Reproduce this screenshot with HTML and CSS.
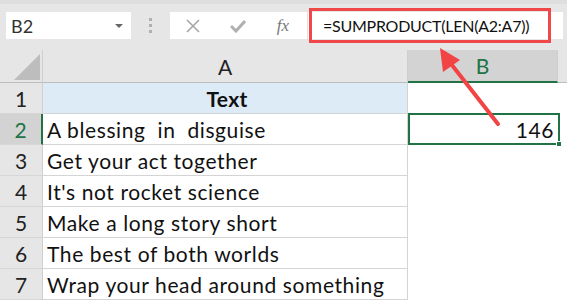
FILE: index.html
```html
<!DOCTYPE html>
<html lang="en">
<head>
    <meta charset="UTF-8">
    <title>SUMPRODUCT LEN</title>
    <link rel="stylesheet" href="styles.css">
</head>
<body>
    <div class="toolbar">
        <div class="name-box">
            <span>B2</span>
            <span class="caret"></span>
        </div>
        <div class="grip"><i></i><i></i><i></i></div>
        <div class="formula-bar">
            <div class="fx-buttons">
                <svg width="14" height="14" viewBox="0 0 14 14"><path d="M1 1 L13 13 M13 1 L1 13" stroke="#a6a6a6" stroke-width="1.6" fill="none"/></svg>
                <svg width="16" height="14" viewBox="0 0 16 14"><path d="M1 7 L6 12 L15 2" stroke="#b0b0b0" stroke-width="3" fill="none"/></svg>
                <span class="fx">fx</span>
            </div>
            <div class="formula-input">
                <span class="formula">=SUMPRODUCT(LEN(A2:A7))</span>
                <div class="callout"></div>
            </div>
        </div>
    </div>

    <div class="sheet">
        <div class="corner"><span></span></div>
        <div class="col-head">A</div>
        <div class="col-head active">B</div>
        <div class="col-rest"></div>

        <div class="row-head">1</div>
        <div class="cell title">Text</div>
        <div class="cell blank"></div>
        <div class="cell blank"></div>

        <div class="row-head active">2</div>
        <div class="cell">A blessing&nbsp; in&nbsp; disguise</div>
        <div class="cell blank selected">146<span class="handle"></span></div>
        <div class="cell blank"></div>

        <div class="row-head">3</div>
        <div class="cell">Get your act together</div>
        <div class="cell blank"></div>
        <div class="cell blank"></div>

        <div class="row-head">4</div>
        <div class="cell">It's not rocket science</div>
        <div class="cell blank"></div>
        <div class="cell blank"></div>

        <div class="row-head">5</div>
        <div class="cell">Make a long story short</div>
        <div class="cell blank"></div>
        <div class="cell blank"></div>

        <div class="row-head">6</div>
        <div class="cell">The best of both worlds</div>
        <div class="cell blank"></div>
        <div class="cell blank"></div>

        <div class="row-head">7</div>
        <div class="cell">Wrap your head around something</div>
        <div class="cell blank"></div>
        <div class="cell blank"></div>

        <!-- annotation arrow -->
        <svg class="arrow" width="90" height="90" viewBox="0 0 90 90">
            <path d="M66 72 L16 8" stroke="#f24444" stroke-width="4" stroke-linecap="round" fill="none"/>
            <path d="M8 -4 L28 8 L11 20 Z" fill="#f24444"/>
        </svg>
    </div>
</body>
</html>
```

FILE: styles.css
```css
* {
    margin: 0;
    padding: 0;
    box-sizing: border-box;
}

body {
    width: 567px;
    height: 302px;
    overflow: hidden;
    background: #ffffff;
    font-family: 'Lato', 'Liberation Sans', sans-serif;
    color: #111;
}

.toolbar {
    height: 50px;
    background: #e6e6e6;
    border-top: 4px solid #dedede;
    display: flex;
    align-items: flex-start;
    padding-top: 8px;
}

.name-box {
    margin-left: 6px;
    width: 125px;
    height: 27px;
    background: #fff;
    display: flex;
    align-items: center;
    justify-content: space-between;
    padding: 0 8px 0 5px;
    font-size: 18px;
    color: #333;
}

.caret {
    width: 0;
    height: 0;
    border-left: 4px solid transparent;
    border-right: 4px solid transparent;
    border-top: 4px solid #666;
}

.grip {
    width: 39px;
    height: 27px;
    display: flex;
    flex-direction: column;
    align-items: center;
    justify-content: center;
    gap: 3px;
}

.grip i {
    display: block;
    width: 3px;
    height: 3px;
    background: #b0b0b0;
}

.formula-bar {
    display: flex;
    height: 27px;
    background: #fff;
    width: 393px;
}

.fx-buttons {
    width: 138px;
    display: flex;
    align-items: center;
    justify-content: space-between;
    padding: 0 18px 0 16px;
    border-right: 1px solid #e0e0e0;
}

.fx {
    font-family: 'Liberation Serif', serif;
    font-style: italic;
    font-size: 17px;
    color: #777;
}

.formula-input {
    position: relative;
    flex: 1;
    display: flex;
    align-items: center;
    padding-left: 15px;
}

.formula {
    font-size: 16px;
    color: #111;
    letter-spacing: -0.25px;
}

.callout {
    position: absolute;
    left: 1px;
    top: -4px;
    width: 242px;
    height: 35px;
    border: 3px solid #f04848;
}

.sheet {
    position: relative;
    display: grid;
    grid-template-columns: 43px 365px 150px 1fr;
    grid-template-rows: 33px repeat(7, 31px);
}

.corner {
    background: #e6e6e6;
    border-right: 1px solid #cfcfcf;
    border-bottom: 1px solid #bdbdbd;
    position: relative;
}

.corner span {
    position: absolute;
    right: 2px;
    bottom: 2px;
    width: 0;
    height: 0;
    border-left: 26px solid transparent;
    border-bottom: 26px solid #bdbdbd;
}

.col-head {
    background: #e6e6e6;
    border-right: 1px solid #cfcfcf;
    border-bottom: 1px solid #bdbdbd;
    display: flex;
    align-items: center;
    justify-content: center;
    font-size: 21px;
    color: #222;
}

.col-head.active {
    background: #d3d3d3;
    color: #217346;
    border-bottom: 2px solid #217346;
}

.col-rest {
    background: #e6e6e6;
    border-bottom: 1px solid #bdbdbd;
}

.row-head {
    background: #e6e6e6;
    border-right: 1px solid #cfcfcf;
    border-bottom: 1px solid #d6d6d6;
    display: flex;
    align-items: center;
    justify-content: center;
    font-size: 21px;
    color: #222;
}

.row-head.active {
    background: #d3d3d3;
    color: #217346;
    border-right: 2px solid #217346;
}

.cell {
    border-right: 1px solid #d4d4d4;
    border-bottom: 1px solid #d4d4d4;
    display: flex;
    align-items: center;
    padding-left: 4px;
    font-size: 21px;
    letter-spacing: 0.6px;
    white-space: nowrap;
}

.cell.title {
    background: #ddebf7;
    justify-content: center;
    font-weight: 700;
    letter-spacing: 0.3px;
}

.cell.blank {
    border: none;
}

.cell.selected {
    position: relative;
    justify-content: flex-end;
    padding-right: 4px;
    border: 2px solid #217346;
    margin: -1px -2px 0 0;
}

.handle {
    position: absolute;
    right: -4px;
    bottom: -4px;
    width: 6px;
    height: 6px;
    background: #217346;
    border: 1px solid #fff;
}

.arrow {
    position: absolute;
    left: 432px;
    top: 2px;
    overflow: visible;
}
```
